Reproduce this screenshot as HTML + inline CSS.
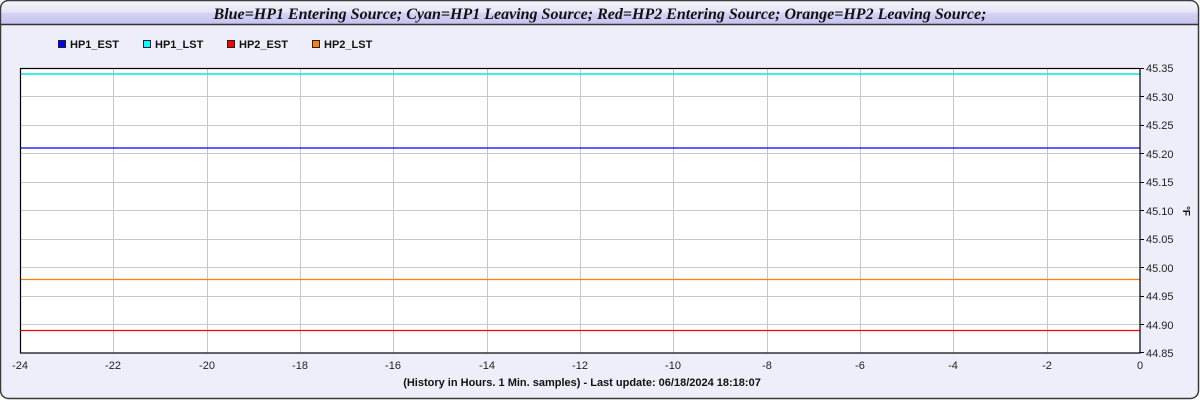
<!DOCTYPE html>
<html><head><meta charset="utf-8"><style>
html,body{margin:0;padding:0;background:#fff;}
svg{display:block;font-family:"Liberation Sans",sans-serif;}
</style></head><body>
<svg width="1200" height="400" viewBox="0 0 1200 400" xmlns="http://www.w3.org/2000/svg">
<defs>
<linearGradient id="hd" x1="0" y1="0" x2="0" y2="1">
<stop offset="0" stop-color="#f4f4fb"/><stop offset="0.45" stop-color="#e6e6f8"/><stop offset="0.55" stop-color="#d2d2f6"/><stop offset="1" stop-color="#c4c4f0"/>
</linearGradient>
</defs>
<rect x="0.5" y="0.5" width="1198" height="398" rx="8" fill="#eeeefb" stroke="#3a3a3a" stroke-width="1.5"/>
<path d="M1.5 24 L1.5 9 Q1.5 1.5 9 1.5 L1190 1.5 Q1197.5 1.5 1197.5 9 L1197.5 24 Z" fill="url(#hd)"/>
<line x1="1" y1="24.5" x2="1199" y2="24.5" stroke="#333" stroke-width="1.5"/>
<text x="600" y="19" text-anchor="middle" font-family="Liberation Serif,serif" font-style="italic" font-weight="bold" font-size="16" fill="#111">Blue=HP1 Entering Source; Cyan=HP1 Leaving Source; Red=HP2 Entering Source; Orange=HP2 Leaving Source;</text>
<g font-size="11" font-weight="bold" fill="#111">
<rect x="58.5" y="40.5" width="7" height="7" fill="#0000ff" stroke="#222"/><text x="70" y="48">HP1_EST</text>
<rect x="143.5" y="40.5" width="7" height="7" fill="#00ffff" stroke="#222"/><text x="155" y="48">HP1_LST</text>
<rect x="227.5" y="40.5" width="7" height="7" fill="#ff0000" stroke="#222"/><text x="239" y="48">HP2_EST</text>
<rect x="312.5" y="40.5" width="7" height="7" fill="#ff8000" stroke="#222"/><text x="324" y="48">HP2_LST</text>
</g>
<rect x="20" y="68" width="1120" height="285" fill="#fff"/>
<g stroke="#c8c8c8" stroke-width="1">
<line x1="20" y1="96.5" x2="1140" y2="96.5"/><line x1="20" y1="125.5" x2="1140" y2="125.5"/><line x1="20" y1="153.5" x2="1140" y2="153.5"/><line x1="20" y1="182.5" x2="1140" y2="182.5"/><line x1="20" y1="210.5" x2="1140" y2="210.5"/><line x1="20" y1="239.5" x2="1140" y2="239.5"/><line x1="20" y1="267.5" x2="1140" y2="267.5"/><line x1="20" y1="296.5" x2="1140" y2="296.5"/><line x1="20" y1="324.5" x2="1140" y2="324.5"/>
<line x1="113.5" y1="68" x2="113.5" y2="353"/><line x1="207.5" y1="68" x2="207.5" y2="353"/><line x1="300.5" y1="68" x2="300.5" y2="353"/><line x1="393.5" y1="68" x2="393.5" y2="353"/><line x1="487.5" y1="68" x2="487.5" y2="353"/><line x1="580.5" y1="68" x2="580.5" y2="353"/><line x1="673.5" y1="68" x2="673.5" y2="353"/><line x1="767.5" y1="68" x2="767.5" y2="353"/><line x1="860.5" y1="68" x2="860.5" y2="353"/><line x1="953.5" y1="68" x2="953.5" y2="353"/><line x1="1047.5" y1="68" x2="1047.5" y2="353"/>
</g>
<line x1="20" y1="74" x2="1140" y2="74" stroke="#00e8e8" stroke-width="1.5"/>
<line x1="20" y1="148" x2="1140" y2="148" stroke="#0000ff" stroke-width="1.2"/>
<line x1="20" y1="279.5" x2="1140" y2="279.5" stroke="#ff8000" stroke-width="1.2"/>
<line x1="20" y1="330.5" x2="1140" y2="330.5" stroke="#ff0000" stroke-width="1.2"/>
<rect x="20.5" y="68.5" width="1119.5" height="284.5" fill="none" stroke="#000" stroke-width="1.2"/>
<g stroke="#000"><line x1="1140" y1="68.5" x2="1144" y2="68.5"/><line x1="1140" y1="96.5" x2="1144" y2="96.5"/><line x1="1140" y1="125.5" x2="1144" y2="125.5"/><line x1="1140" y1="153.5" x2="1144" y2="153.5"/><line x1="1140" y1="182.5" x2="1144" y2="182.5"/><line x1="1140" y1="210.5" x2="1144" y2="210.5"/><line x1="1140" y1="239.5" x2="1144" y2="239.5"/><line x1="1140" y1="267.5" x2="1144" y2="267.5"/><line x1="1140" y1="296.5" x2="1144" y2="296.5"/><line x1="1140" y1="324.5" x2="1144" y2="324.5"/><line x1="1140" y1="352.5" x2="1144" y2="352.5"/></g>
<g font-size="11" fill="#222">
<text x="1146" y="72">45.35</text><text x="1146" y="101">45.30</text><text x="1146" y="129">45.25</text><text x="1146" y="158">45.20</text><text x="1146" y="186">45.15</text><text x="1146" y="215">45.10</text><text x="1146" y="243">45.05</text><text x="1146" y="272">45.00</text><text x="1146" y="300">44.95</text><text x="1146" y="329">44.90</text><text x="1146" y="357">44.85</text>
</g>
<text x="1183" y="211" font-size="10" font-weight="bold" fill="#111" transform="rotate(90 1183 211)" text-anchor="middle">°F</text>
<g font-size="11" fill="#222" text-anchor="middle">
<text x="20" y="369">-24</text><text x="113" y="369">-22</text><text x="207" y="369">-20</text><text x="300" y="369">-18</text><text x="393" y="369">-16</text><text x="487" y="369">-14</text><text x="580" y="369">-12</text><text x="673" y="369">-10</text><text x="767" y="369">-8</text><text x="860" y="369">-6</text><text x="953" y="369">-4</text><text x="1047" y="369">-2</text><text x="1140" y="369">0</text>
</g>
<text x="582" y="386" text-anchor="middle" font-size="11" font-weight="bold" fill="#111">(History in Hours. 1 Min. samples) - Last update: 06/18/2024 18:18:07</text>
</svg>
</body></html>
